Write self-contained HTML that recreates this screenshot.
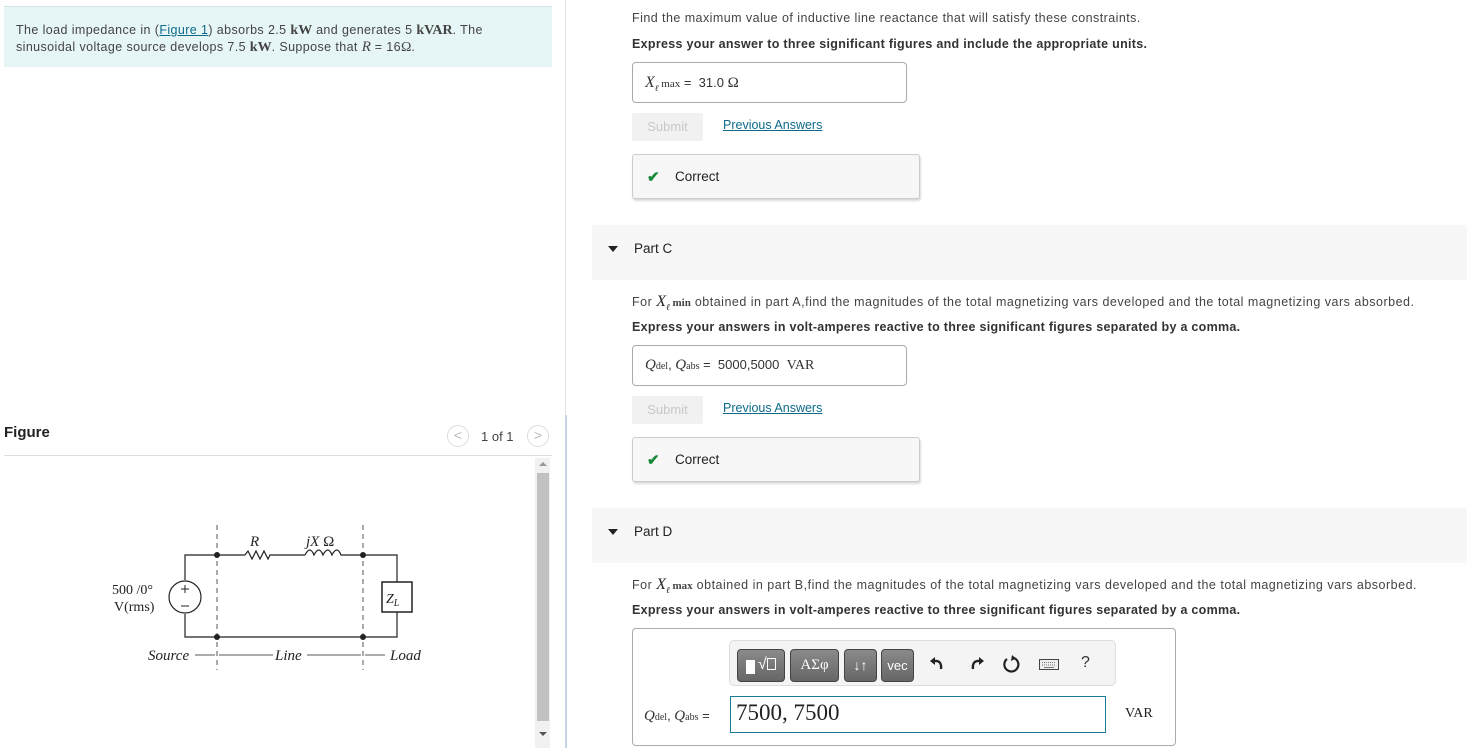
<!DOCTYPE html>
<html><head><meta charset="utf-8"><style>
*{margin:0;padding:0;box-sizing:border-box}
body{width:1467px;height:748px;overflow:hidden;background:#fff;font-family:"Liberation Sans",sans-serif;color:#333;position:relative;font-size:13px}
.a{position:absolute;white-space:nowrap}
.m{font-family:"Liberation Serif",serif;letter-spacing:0}
.b{font-weight:bold;color:#333}
.lk{color:#0d6a8a;text-decoration:underline}
.inp{position:absolute;border:1px solid #aaa;border-radius:4px;background:#fff}
.sub{position:absolute;background:#f1f1f1;color:#c8c8c8;font-size:13px;text-align:center;border-radius:2px}
.cor{position:absolute;background:#f7f7f7;border:1px solid #ccc;border-radius:3px;box-shadow:1px 2px 2px rgba(0,0,0,.15)}
.part{position:absolute;left:592px;width:875px;height:55px;background:#f7f7f7}
.tri{position:absolute;left:16px;top:21px;width:0;height:0;border-left:5px solid transparent;border-right:5px solid transparent;border-top:6px solid #222}
.tb{position:absolute;top:8px;height:33px;background:linear-gradient(#8a8a8a,#666);border:1px solid #444;border-radius:4px;color:#fff;text-align:center;line-height:31px}
</style></head><body>

<div class="a" style="left:4px;top:6px;width:548px;height:61px;background:#e6f5f6;border-top:1px solid #d7e3e4"></div>
<div class="a" style="left:16px;top:22px;line-height:17px;font-size:12.5px;color:#444;letter-spacing:0.4px">The load impedance in (<span class="lk">Figure 1</span>) absorbs 2.5 <b class="m" style="font-size:14px">kW</b> and generates 5 <b class="m" style="font-size:14px">kVAR</b>. The<br>sinusoidal voltage source develops 7.5 <b class="m" style="font-size:14px">kW</b>. Suppose that <i class="m" style="font-size:15px">R</i> = 16<span class="m" style="font-size:14px">Ω</span>.</div>

<div class="a" style="left:565px;top:0;width:1px;height:415px;background:#e3e3e3"></div>
<div class="a" style="left:565px;top:415px;width:2px;height:333px;background:#c7d6e6"></div>

<div class="a" style="left:4px;top:424px;font-size:15px;font-weight:bold;color:#222">Figure</div>
<div class="a" style="left:4px;top:455px;width:548px;height:1px;background:#ddd"></div>
<div class="a" style="left:447px;top:425px;width:22px;height:22px;border:1px solid #ddd;border-radius:50%;color:#bbb;text-align:center;line-height:19px;font-size:14px">&lt;</div>
<div class="a" style="left:481px;top:429px;font-size:13px;color:#444">1 of 1</div>
<div class="a" style="left:527px;top:425px;width:22px;height:22px;border:1px solid #ddd;border-radius:50%;color:#bbb;text-align:center;line-height:19px;font-size:14px">&gt;</div>

<div class="a" style="left:535px;top:458px;width:15px;height:290px;background:#f1f1f1"></div>
<div class="a" style="left:537px;top:473px;width:12px;height:248px;background:#c1c1c1"></div>
<div class="a" style="left:539px;top:462px;border-left:4px solid transparent;border-right:4px solid transparent;border-bottom:4px solid #999"></div>
<div class="a" style="left:539px;top:732px;border-left:4px solid transparent;border-right:4px solid transparent;border-top:4px solid #555"></div>

<svg class="a" style="left:100px;top:510px" width="350" height="170" viewBox="0 0 350 170" font-family="Liberation Serif" fill="none" stroke="#222" stroke-width="1.2">
<g stroke-dasharray="5,4" stroke="#444" stroke-width="0.9"><line x1="117" y1="15" x2="117" y2="160"/><line x1="263" y1="15" x2="263" y2="160"/></g>
<polyline points="85,70 85,45 145,45"/>
<path d="M145,45 l3,-4 l4,8 l4,-8 l4,8 l4,-8 l4,8 l2,-4 L205,45"/>
<path d="M205,45 q5,-10 9,0 q5,-10 9,0 q5,-10 9,0 q5,-10 9,0 L297,45 L297,72"/>
<rect x="282" y="72" width="30" height="30" stroke-width="1.5"/>
<polyline points="297,102 297,127 85,127 85,104"/>
<circle cx="85" cy="87" r="16"/>
<line x1="81" y1="79" x2="89" y2="79" stroke-width="1"/><line x1="85" y1="75" x2="85" y2="83" stroke-width="1"/>
<line x1="81" y1="96" x2="89" y2="96" stroke-width="1"/>
<g fill="#222" stroke="none"><circle cx="117" cy="45" r="3"/><circle cx="263" cy="45" r="3"/><circle cx="117" cy="127" r="3"/><circle cx="263" cy="127" r="3"/></g>
<g stroke-width="0.8"><line x1="95" y1="145" x2="115" y2="145"/><line x1="119" y1="145" x2="173" y2="145"/><line x1="207" y1="145" x2="261" y2="145"/><line x1="265" y1="145" x2="285" y2="145"/></g>
<g fill="#222" stroke="none" font-size="15">
<text x="150" y="36" font-style="italic">R</text>
<text x="206" y="36" font-style="italic">jX <tspan font-style="normal">Ω</tspan></text>
<text x="286" y="93" font-style="italic" font-size="14">Z<tspan font-size="10" dy="3">L</tspan></text>
<text x="12" y="84" font-size="14">500 /0°</text>
<text x="14" y="101" font-size="14">V(rms)</text>
<text x="48" y="150" font-style="italic">Source</text>
<text x="175" y="150" font-style="italic">Line</text>
<text x="290" y="150" font-style="italic">Load</text>
</g>
</svg>

<div class="a" style="left:632px;top:11px;font-size:12.5px;color:#444;letter-spacing:0.45px">Find the maximum value of inductive line reactance that will satisfy these constraints.</div>
<div class="a b" style="left:632px;top:37px;font-size:12.5px;letter-spacing:0.3px">Express your answer to three significant figures and include the appropriate units.</div>
<div class="inp" style="left:632px;top:62px;width:275px;height:41px"></div>
<div class="a" style="left:645px;top:74px;color:#333"><i class="m" style="font-size:16px">X<sub style="font-size:9px">ℓ</sub></i><span class="m" style="font-size:11px"> max</span> = &nbsp;31.0 <span class="m" style="font-size:15px">Ω</span></div>
<div class="sub" style="left:632px;top:113px;width:71px;height:28px;line-height:28px">Submit</div>
<div class="a lk" style="left:723px;top:118px;font-size:12.5px">Previous Answers</div>
<div class="cor" style="left:632px;top:154px;width:288px;height:45px"></div>
<div class="a" style="left:647px;top:168px;color:#1a8a3a;font-size:15px;font-weight:bold">✔</div>
<div class="a" style="left:675px;top:169px;font-size:13.5px;color:#222">Correct</div>

<div class="part" style="top:225px"><div class="tri"></div><div class="a" style="left:42px;top:16px;font-size:13.5px;color:#222">Part C</div></div>

<div class="a" style="left:632px;top:293px;font-size:12.5px;color:#444;letter-spacing:0.5px">For <i class="m" style="font-size:16px;color:#222">X<sub style="font-size:9px">ℓ</sub></i><b class="m" style="font-size:11px"> min</b> obtained in part A,find the magnitudes of the total magnetizing vars developed and the total magnetizing vars absorbed.</div>
<div class="a b" style="left:632px;top:320px;font-size:12.5px;letter-spacing:0.28px">Express your answers in volt-amperes reactive to three significant figures separated by a comma.</div>
<div class="inp" style="left:632px;top:345px;width:275px;height:41px"></div>
<div class="a" style="left:645px;top:357px"><i class="m" style="font-size:15px">Q</i><span class="m" style="font-size:10px">del</span>, <i class="m" style="font-size:15px">Q</i><span class="m" style="font-size:10px">abs</span> = &nbsp;5000,5000 &nbsp;<span class="m" style="font-size:14px">VAR</span></div>
<div class="sub" style="left:632px;top:396px;width:71px;height:28px;line-height:28px">Submit</div>
<div class="a lk" style="left:723px;top:401px;font-size:12.5px">Previous Answers</div>
<div class="cor" style="left:632px;top:437px;width:288px;height:45px"></div>
<div class="a" style="left:647px;top:451px;color:#1a8a3a;font-size:15px;font-weight:bold">✔</div>
<div class="a" style="left:675px;top:452px;font-size:13.5px;color:#222">Correct</div>

<div class="part" style="top:508px"><div class="tri"></div><div class="a" style="left:42px;top:16px;font-size:13.5px;color:#222">Part D</div></div>

<div class="a" style="left:632px;top:576px;font-size:12.5px;color:#444;letter-spacing:0.5px">For <i class="m" style="font-size:16px;color:#222">X<sub style="font-size:9px">ℓ</sub></i><b class="m" style="font-size:11px"> max</b> obtained in part B,find the magnitudes of the total magnetizing vars developed and the total magnetizing vars absorbed.</div>
<div class="a b" style="left:632px;top:603px;font-size:12.5px;letter-spacing:0.28px">Express your answers in volt-amperes reactive to three significant figures separated by a comma.</div>

<div class="inp" style="left:632px;top:628px;width:544px;height:118px;border-color:#aaa"></div>
<div class="a" style="left:729px;top:640px;width:387px;height:46px;background:#f4f4f4;border:1px solid #ddd;border-radius:5px">
 <div class="tb" style="left:7px;width:48px"><span style="position:absolute;left:8px;top:10px;width:9px;height:14px;background:#fff"></span><span style="position:absolute;left:20px;top:-1px;font-size:16px">√<span style="display:inline-block;width:9px;height:12px;border:1px solid #fff;vertical-align:-1px"></span></span></div>
 <div class="tb" style="left:60px;width:49px;font-family:'Liberation Serif';font-size:15px">ΑΣφ</div>
 <div class="tb" style="left:114px;width:33px;font-size:14px">↓↑</div>
 <div class="tb" style="left:151px;width:33px;font-size:13px">vec</div>
 <svg class="a" style="left:199px;top:14px" width="16" height="16" viewBox="0 0 16 16"><path d="M6,2 L1,6 L6,10 Z" fill="#222"/><path d="M5,6 Q13,5 12,14" fill="none" stroke="#222" stroke-width="2.4"/></svg>
 <svg class="a" style="left:239px;top:14px" width="16" height="16" viewBox="0 0 16 16"><path d="M10,2 L15,6 L10,10 Z" fill="#222"/><path d="M11,6 Q3,5 4,14" fill="none" stroke="#222" stroke-width="2.4"/></svg>
 <svg class="a" style="left:272px;top:13px" width="18" height="20" viewBox="0 0 18 20"><path d="M12,4 A7,7 0 1 1 5,5" fill="none" stroke="#222" stroke-width="2.2"/><path d="M10,1 L14,4.5 L9,7 Z" fill="#222"/></svg>
 <svg class="a" style="left:309px;top:18px" width="20" height="11"><rect x="0.5" y="0.5" width="19" height="10" fill="#eee" stroke="#444"/><g stroke="#777"><line x1="3" y1="3.5" x2="17" y2="3.5" stroke-dasharray="1,1"/><line x1="3" y1="6" x2="17" y2="6" stroke-dasharray="1,1"/><line x1="5" y1="8.5" x2="15" y2="8.5"/></g></svg>
 <div class="a" style="left:351px;top:13px;font-size:16px;color:#333">?</div>
</div>
<div class="a" style="left:644px;top:708px"><i class="m" style="font-size:15px">Q</i><span class="m" style="font-size:10px">del</span>, <i class="m" style="font-size:15px">Q</i><span class="m" style="font-size:10px">abs</span> = </div>
<div class="a" style="left:730px;top:696px;width:376px;height:37px;border:1px solid #1a7a9a;background:#fff"></div>
<div class="a m" style="left:736px;top:700px;font-size:23px;color:#222">7500, 7500</div>
<div class="a m" style="left:1125px;top:706px;font-size:14px;color:#222">VAR</div>
</body></html>
